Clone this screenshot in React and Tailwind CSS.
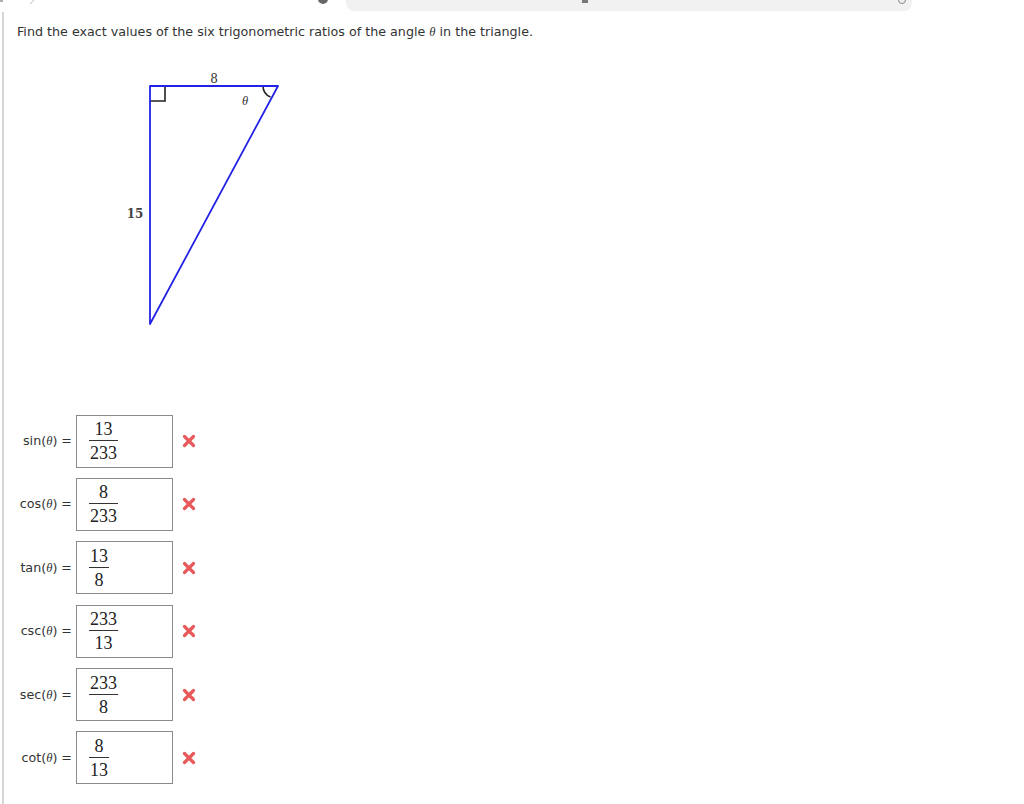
import React from "react";

const rows = [
  { fn: "sin", n: "13", d: "233" },
  { fn: "cos", n: "8", d: "233" },
  { fn: "tan", n: "13", d: "8" },
  { fn: "csc", n: "233", d: "13" },
  { fn: "sec", n: "233", d: "8" },
  { fn: "cot", n: "8", d: "13" },
];

function Cross() {
  return (
    <svg width="14" height="14" viewBox="0 0 14 14">
      <path d="M2.5 2.5 L11.5 11.5 M11.5 2.5 L2.5 11.5" stroke="#e8595c" strokeWidth="3.2" strokeLinecap="round" />
    </svg>
  );
}

function Frac({ n, d }) {
  return (
    <span className="inline-flex flex-col items-center leading-none text-[18px] text-[#222]" style={{ fontFamily: '"Liberation Serif", "Times New Roman", serif' }}>
      <span className="px-[1px] pb-[2px]">{n}</span>
      <span className="self-stretch border-t border-[#333]"></span>
      <span className="px-[1px] pt-[3px]">{d}</span>
    </span>
  );
}

export default function App() {
  return (
    <div className="relative w-[1024px] h-[804px] bg-white overflow-hidden" style={{ fontFamily: '"DejaVu Sans", Verdana, sans-serif' }}>
      {/* browser chrome remnant */}
      <div className="flex h-[11px] items-start">
        <div className="w-[346px] relative">
          <svg className="absolute left-0 top-0" width="40" height="6" viewBox="0 0 40 6">
            <path d="M0 1 L3 1" stroke="#777" strokeWidth="1.2" />
            <path d="M30 4 L34 0" stroke="#bbb" strokeWidth="1" />
          </svg>
          <span className="absolute left-[318px] top-[-4px] w-[10px] h-[8px] rounded-b-full bg-[#666]"></span>
        </div>
        <div className="w-[566px] h-[11px] bg-[#f1f1f1] rounded-b-[8px] relative">
          <span className="absolute left-[236px] top-0 w-[6px] h-[3px] bg-[#777]"></span>
          <span className="absolute right-[6px] top-[-4px] w-[8px] h-[8px] rounded-full border border-[#888]"></span>
        </div>
      </div>

      <div className="ml-[2px] mt-[1px] border-l-2 border-[#d6d6d6] h-[792px] pl-[13px]">
        <p className="pt-[12px] text-[12.7px] leading-[16px] text-[#333]">
          Find the exact values of the six trigonometric ratios of the angle{" "}
          <span className="italic" style={{ fontFamily: '"Liberation Serif", serif' }}>θ</span> in the triangle.
        </p>

        <svg width="300" height="270" viewBox="0 0 300 270" className="block mt-[26px] ml-[-17px]">
          <text x="214" y="17" fontSize="12" textAnchor="middle" fill="#333" fontFamily="DejaVu Serif, serif">8</text>
          <text x="135" y="152" fontSize="12" fontWeight="bold" textAnchor="middle" fill="#444" fontFamily="DejaVu Serif, serif">15</text>
          <text x="245" y="39" fontSize="12.5" fontStyle="italic" textAnchor="middle" fill="#333" fontFamily="Liberation Serif, serif">θ</text>
          <path d="M150 35 H165 V20" fill="none" stroke="#222" strokeWidth="1.6" />
          <path d="M263 20 A12 12 0 0 0 270.5 31" fill="none" stroke="#222" strokeWidth="1.6" />
          <polygon points="150,20 278,20 150,258" fill="none" stroke="#2222e6" strokeWidth="1.8" strokeLinejoin="round" />
        </svg>

        <div className="mt-[79px] ml-[-13px] flex flex-col gap-[11.4px]">
          {rows.map((r) => (
            <div key={r.fn} className="flex items-center h-[52px]">
              <div className="w-[72px] pr-[4px] text-right text-[12.7px] text-[#333] whitespace-nowrap">
                {r.fn}(<span className="italic" style={{ fontFamily: '"Liberation Serif", serif' }}>θ</span>) =
              </div>
              <div className="w-[97px] h-[53px] border border-[#8a8a8a] flex items-center pl-[12px]">
                <Frac n={r.n} d={r.d} />
              </div>
              <div className="ml-[9px] flex items-center">
                <Cross />
              </div>
            </div>
          ))}
        </div>
      </div>
    </div>
  );
}
